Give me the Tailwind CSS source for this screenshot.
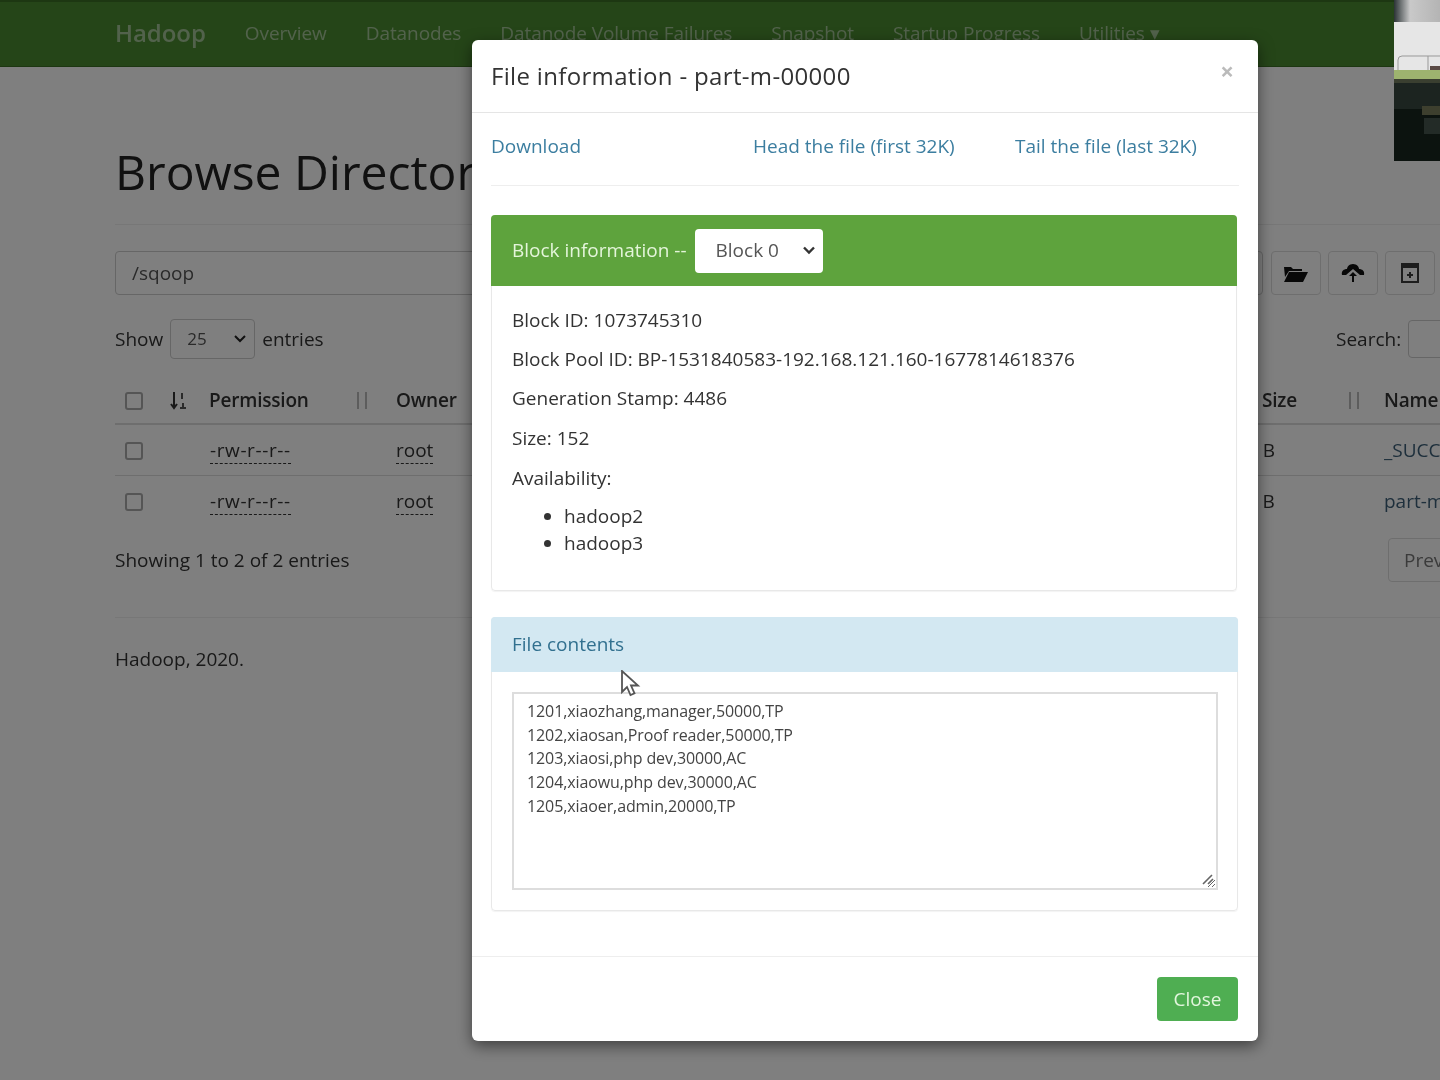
<!DOCTYPE html>
<html lang="en">
  <head>
    <meta charset="UTF-8" />
    <meta name="viewport" content="width=device-width, initial-scale=1.0" />
    <script src="https://cdn.jsdelivr.net/npm/@tailwindcss/browser@4"></script>
    <title>Browsing HDFS</title>
  </head>
  <body class="bg-white font-['Open_Sans',sans-serif] overflow-hidden">
    <div class="relative w-[1440px] h-[1080px] overflow-hidden blur-[0.7px]">
      <!-- navbar -->
      <nav class="h-[67px] bg-[#4a8a30] border-t-2 border-b border-[#3a6f25] flex items-center pl-[115px] pb-[2px] text-white/50 text-[19px] tracking-[-0.06px] whitespace-nowrap">
        <span class="text-[24px] font-semibold mr-[39px]">Hadoop</span>
        <span class="mr-[39px]">Overview</span>
        <span class="mr-[39px]">Datanodes</span>
        <span class="mr-[39px]">Datanode Volume Failures</span>
        <span class="mr-[39px]">Snapshot</span>
        <span class="mr-[39px]">Startup Progress</span>
        <span>Utilities ▾</span>
      </nav>

      <!-- page behind the modal -->
      <main class="w-[1440px] pl-[115px] text-[#333] text-[19px]">
        <div class="h-[158px] border-b border-[#eee] flex items-end pb-[22px] mr-[-200px]">
          <h1 class="text-[48px] leading-[60px] text-[#222] whitespace-nowrap">Browse Directory</h1>
        </div>
        <div class="mt-[26px] flex gap-[7px] h-[44px]">
          <div class="w-[1148px] mr-[1px] border border-[#ccc] rounded flex items-center pl-[16px] text-[#555]">/sqoop</div>
          <div class="w-[50px] border border-[#ddd] rounded flex items-center justify-center">
            <svg width="26" height="18" viewBox="0 0 26 18"><path fill="#111" d="M1 3h7l2 2h9v2H6L2 13zM6 8h19l-5 10H1z"/></svg>
          </div>
          <div class="w-[50px] border border-[#ddd] rounded flex items-center justify-center">
            <svg width="24" height="21" viewBox="0 0 24 21"><path fill="#111" d="M12 1c4 0 6 3 6 5 3 0 6 2 5 6h-4l-7-6-7 6H1C0 8 3 6 6 6c0-2 2-5 6-5zM12 9l4 4h-3v6h-2v-6H8z"/></svg>
          </div>
          <div class="w-[50px] border border-[#ddd] rounded flex items-center justify-center">
            <svg width="18" height="20" viewBox="0 0 18 20"><path fill="#3a3a3a" fill-rule="evenodd" d="M0 0h18v20H0zM2 5v13h14V5zM8 9h2v2h2v2h-2v2H8v-2H6v-2h2z"/></svg>
          </div>
        </div>
        <div class="mt-[23px] flex items-center h-[42px] relative">
          <span>Show</span>
          <span class="ml-[7px] w-[85px] h-[40px] border border-[#ccc] rounded flex items-center justify-between pl-[16px] pr-[8px] text-[#555] text-[17px]">25
            <svg width="12" height="8" viewBox="0 0 12 8"><path d="M1 1l5 5 5-5" fill="none" stroke="#222" stroke-width="2"/></svg>
          </span>
          <span class="ml-[7px]">entries</span>
          <span class="absolute left-[1221px]">Search:</span>
          <span class="absolute left-[1293px] w-[60px] h-[38px] border border-[#ccc] rounded"></span>
        </div>

        <!-- table -->
        <div class="mt-[19px] w-[1400px]">
          <div class="flex items-center h-[46px] border-b-2 border-[#ddd] font-semibold tracking-[-0.2px] pb-[1px]">
            <span class="w-[18px] h-[18px] ml-[10px] border-2 border-[#aaa] rounded-[3px]"></span>
            <svg class="ml-[26px] w-[20px]" width="20" height="20" viewBox="0 0 20 20"><path d="M5 1v16M2 13l3 4 3-4" fill="none" stroke="#333" stroke-width="2"/><path d="M13 2v6M11 17h6M14 12v5" fill="none" stroke="#555" stroke-width="2"/></svg>
            <span class="ml-[20px] w-[145px]">Permission</span>
            <svg class="-ml-[2px] mr-[24px]" width="20" height="20" viewBox="0 0 20 20"><path d="M6 1v17M14 18V1" fill="none" stroke="#bbb" stroke-width="2"/></svg>
            <span class="w-[866px]">Owner</span>
            <span class="w-[82px]">Size</span>
            <svg class="mr-[20px]" width="20" height="20" viewBox="0 0 20 20"><path d="M6 1v17M14 18V1" fill="none" stroke="#bbb" stroke-width="2"/></svg>
            <span>Name</span>
          </div>
          <div class="flex items-center h-[51px] border-b border-[#ddd] pt-[1px]">
            <span class="w-[18px] h-[18px] ml-[10px] border-2 border-[#aaa] rounded-[3px]"></span>
            <span class="ml-[67px] w-[186px] tracking-[0.6px]"><span class="border-b border-dashed border-[#333]">-rw-r--r--</span></span>
            <span class="w-[829px]"><span class="border-b border-dashed border-[#333]">root</span></span>
            <span class="w-[159px] pl-[22px]">0 B</span>
            <span class="text-[#3c5f78]">_SUCCESS</span>
          </div>
          <div class="flex items-center h-[51px]">
            <span class="w-[18px] h-[18px] ml-[10px] border-2 border-[#aaa] rounded-[3px]"></span>
            <span class="ml-[67px] w-[186px] tracking-[0.6px]"><span class="border-b border-dashed border-[#333]">-rw-r--r--</span></span>
            <span class="w-[829px]"><span class="border-b border-dashed border-[#333]">root</span></span>
            <span class="w-[159px]">152 B</span>
            <span class="text-[#3c5f78]">part-m-00000</span>
          </div>
        </div>
        <div class="mt-[11px] flex items-center h-[44px] relative">
          <span>Showing 1 to 2 of 2 entries</span>
          <span class="absolute left-[1273px] w-[120px] h-[44px] border border-[#ddd] rounded flex items-center pl-[15px] text-[#777]">Previous</span>
        </div>
        <div class="mt-[35px] border-t border-[#eee] pt-[27px] mr-[-200px]">Hadoop, 2020.</div>
      </main>

      <!-- backdrop -->
      <div class="absolute inset-0 bg-black/50"></div>

      <!-- webcam thumbnail -->
      <svg class="absolute right-0 top-0" width="46" height="161" viewBox="0 0 46 161">
        <defs>
          <linearGradient id="wall" x1="0" y1="0" x2="1" y2="0">
            <stop offset="0" stop-color="#2b3335"/>
            <stop offset="0.35" stop-color="#c9c9c9"/>
            <stop offset="1" stop-color="#b4b4b4"/>
          </linearGradient>
        </defs>
        <rect width="46" height="161" fill="#0c130f"/>
        <rect width="46" height="24" fill="url(#wall)"/>
        <rect y="22" width="46" height="50" fill="#e6e6e6"/>
        <path d="M4 72V60q0-4 4-4h38M34 56v16" fill="none" stroke="#999" stroke-width="1"/>
        <rect x="36" y="66" width="10" height="5" fill="#5a4a45"/>
        <rect y="70" width="46" height="9" fill="#9db36f"/>
        <rect y="79" width="46" height="4" fill="#3a3f30"/>
        <rect y="83" width="46" height="26" fill="#1c2420"/>
        <rect x="28" y="106" width="18" height="9" fill="#3d3f2e"/>
        <rect x="30" y="118" width="16" height="16" fill="#232b27"/>
      </svg>

      <!-- modal -->
      <div class="absolute left-[472px] top-[40px] w-[786px] h-[1001px] bg-white rounded-[6px] shadow-[0_5px_15px_rgba(0,0,0,0.5)] flex flex-col text-[#333] text-[19px]">
        <div class="h-[73px] border-b border-[#e5e5e5] flex items-center justify-between px-[19px] shrink-0">
          <h4 class="text-[24px] tracking-[0.33px]">File information - part-m-00000</h4>
          <span class="text-[#bbb] text-[24px] leading-none -mt-[10px] mr-[5px] font-bold">×</span>
        </div>
        <div class="flex-1 px-[19px]">
          <div class="h-[73px] border-b border-[#eee] flex items-center pb-[6px]">
            <a class="w-[262px] text-[#3c7ea0]">Download</a>
            <a class="w-[262px] text-[#3c7ea0]">Head the file (first 32K)</a>
            <a class="text-[#3c7ea0]">Tail the file (last 32K)</a>
          </div>

          <section class="mt-[29px] w-[746px] border border-[#e8e8e8] rounded-[4px] h-[376px] shadow-[0_1px_1px_rgba(0,0,0,0.05)]">
            <div class="h-[71px] -mx-px -mt-px bg-[#5ea33d] flex items-center pl-[21px] text-[#e4f5da] rounded-t-[4px]">
              <span>Block information --</span>
              <span class="ml-[8px] w-[128px] h-[44px] bg-white rounded-[4px] flex items-center justify-between pl-[21px] pr-[7px] text-[#555]">Block 0
                <svg width="14" height="9" viewBox="0 0 14 9"><path d="M2 1.500l5 5 5-5" fill="none" stroke="#333" stroke-width="2.400"/></svg>
              </span>
            </div>
            <div class="pl-[20px] pt-[21px] leading-[27px]">
              <p>Block ID: 1073745310</p>
              <p class="mt-[12px]">Block Pool ID: BP-1531840583-192.168.121.160-1677814618376</p>
              <p class="mt-[12px]">Generation Stamp: 4486</p>
              <p class="mt-[13px]">Size: 152</p>
              <p class="mt-[13px]">Availability:</p>
              <ul class="list-disc pl-[52px] mt-[11px]">
                <li>hadoop2</li>
                <li>hadoop3</li>
              </ul>
            </div>
          </section>

          <section class="mt-[26px] w-[747px] border border-[#e8e8e8] rounded-[4px] h-[294px] shadow-[0_1px_1px_rgba(0,0,0,0.05)]">
            <div class="h-[55px] -mx-px -mt-px bg-[#d3e8f2] flex items-center pl-[21px] text-[#31708f] rounded-t-[4px]">File contents</div>
            <div class="px-[20px] pt-[20px] relative">
              <textarea readonly rows="8" class="block w-[706px] h-[198px] border-2 border-[#ddd] pl-[13px] pt-[6px] text-[#444] text-[16px] leading-[23.7px] tracking-[-0.1px] outline-none">1201,xiaozhang,manager,50000,TP
1202,xiaosan,Proof reader,50000,TP
1203,xiaosi,php dev,30000,AC
1204,xiaowu,php dev,30000,AC
1205,xiaoer,admin,20000,TP</textarea>
              <svg class="absolute left-[710px] top-[201px]" width="13" height="13" viewBox="0 0 13 13"><path d="M1 11l9-9M6 11l5-5" stroke="#666" stroke-width="1.600" fill="none"/></svg>
            </div>
          </section>
        </div>
        <div class="h-[85px] border-t border-[#eee] flex items-center justify-end pr-[20px] shrink-0">
          <button class="w-[81px] h-[44px] bg-[#4fae52] rounded-[4px] text-[#e2f6dd]">Close</button>
        </div>
      </div>

      <!-- mouse pointer -->
      <svg class="absolute left-[620px] top-[670px]" width="22" height="30" viewBox="0 0 22 30">
        <path d="M2 1v21l5-5 3.500 8 4-1.700-3.500-7.800h7z" fill="#fff" stroke="#555" stroke-width="1.800"/>
      </svg>
    </div>
  </body>
</html>
